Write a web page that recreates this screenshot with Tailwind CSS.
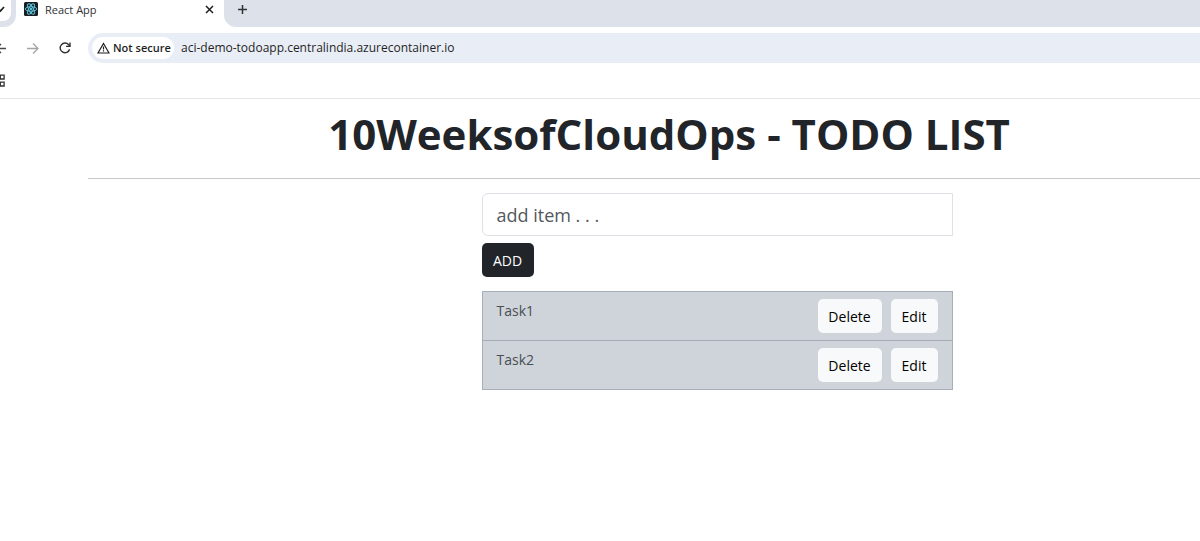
<!DOCTYPE html>
<html lang="en">
  <head>
    <meta charset="utf-8">
    <meta name="viewport" content="width=device-width, initial-scale=1">
    <script src="https://cdn.jsdelivr.net/npm/@tailwindcss/browser@4"></script>
    <title>React App</title>
  </head>
  <body class="min-h-screen overflow-x-hidden bg-white font-['Open_Sans','Noto_Sans',sans-serif] text-[#212529]">
    <!-- Browser window -->
    <header class="border-b border-[#e4e5e7]">
      <div class="flex h-[27px] bg-white">
        <div class="w-4 rounded-br-xl bg-[#dde2ea]">
          <button aria-label="Search tabs" class="flex h-[21px] w-[11px] items-start justify-end overflow-hidden rounded-br-lg bg-white">
            <svg class="mt-[6px] mr-[6px] h-2 w-[5px] shrink-0" viewBox="0 0 5 8" fill="none" stroke="#1f1f1f" stroke-width="1.7"><path d="M-3 1l3.500 4L4 1"/></svg>
          </button>
        </div>
        <div class="flex w-[208px] items-start pl-2">
          <svg class="mt-[2px] h-[14px] w-[14px] shrink-0" viewBox="0 0 28 28">
            <rect width="28" height="28" rx="3" fill="#1b1d21"/>
            <g fill="none" stroke="#58c4dc" stroke-width="2">
              <ellipse cx="14" cy="14" rx="11.500" ry="4.500"/>
              <ellipse cx="14" cy="14" rx="11.500" ry="4.500" transform="rotate(60 14 14)"/>
              <ellipse cx="14" cy="14" rx="11.500" ry="4.500" transform="rotate(120 14 14)"/>
            </g>
            <circle cx="14" cy="14" r="2.600" fill="#58c4dc"/>
          </svg>
          <span class="ml-[7px] flex-1 text-[11px] leading-[19px] text-[#303134]">React App</span>
          <button aria-label="Close tab" class="mt-[5px] mr-[10px]">
            <svg class="h-[9px] w-[9px]" viewBox="0 0 9 9" stroke="#1f1f1f" stroke-width="1.5"><path d="M1 1l7 7M8 1l-7 7"/></svg>
          </button>
        </div>
        <div class="flex-1 rounded-bl-xl bg-[#dde2ea]">
          <button aria-label="New tab" class="mt-1 ml-[13px] block">
            <svg class="h-[11px] w-[11px]" viewBox="0 0 11 11" stroke="#303134" stroke-width="1.5"><path d="M5.500 1v9M1 5.500h9"/></svg>
          </button>
        </div>
      </div>

      <nav class="flex items-center pt-[6px]">
        <button aria-label="Back" class="w-[27px]">
          <svg class="h-[11px] w-[6px]" viewBox="0 0 6 11" fill="none" stroke="#474747" stroke-width="1.4"><path d="M-5 5.500H6M5 .5M1 1L-3.500 5.500 1 10"/></svg>
        </button>
        <button aria-label="Forward" class="w-8">
          <svg class="h-[11px] w-[12px]" viewBox="0 0 12 11" fill="none" stroke="#a5a5a5" stroke-width="1.3"><path d="M0 5.500h11M6 .5l5 5-5 5"/></svg>
        </button>
        <button aria-label="Reload" class="w-[29px]">
          <svg class="h-3 w-3" viewBox="0 0 12 12" fill="none" stroke="#303134" stroke-width="1.4"><path d="M10.600 7.200A4.800 4.800 0 1 1 9.700 2.800L10.800 4"/><path d="M11 .5v3.900H7"/></svg>
        </button>
        <div class="flex h-[30px] flex-1 items-center rounded-l-full bg-[#e9eef6] pl-1">
          <button class="flex h-[22px] w-[82px] items-center rounded-full bg-white pl-[5px] text-[11px] font-semibold text-[#1f1f1f]">
            <svg class="mr-[3px] h-3 w-[13px] shrink-0" viewBox="0 0 13 12" fill="none" stroke="#1f1f1f" stroke-width="1.2"><path d="M6.500 1.500L12 11H1z"/><path d="M6.500 4.500v3M6.500 8.300v1.300"/></svg>
            <span class="whitespace-nowrap">Not secure</span>
          </button>
          <input aria-label="Address" class="ml-[7px] min-w-0 flex-1 bg-transparent text-[12px] text-[#1f1f1f] outline-none" value="aci-demo-todoapp.centralindia.azurecontainer.io">
        </div>
      </nav>

      <div class="flex h-[35px] items-center">
        <button aria-label="Apps">
          <svg class="h-[13px] w-[5px]" viewBox="0 0 5 13" fill="none" stroke="#303134" stroke-width="1.3"><path d="M.3 1.200h3.800v3.800H.3zM.3 8.200h3.800v3.800H.3z"/></svg>
        </button>
      </div>
    </header>

    <!-- Todo app -->
    <main>
      <h1 class="pt-2 pl-[138px] text-center text-[42px] leading-[54px] font-bold whitespace-nowrap">10WeeksofCloudOps - TODO LIST</h1>
      <hr class="mt-[17px] ml-[88px] border-[#c8c9ca]">
      <div class="pt-[14px] pl-[234px]">
        <div class="mx-auto max-w-[471px]">
          <form>
            <input type="text" aria-label="New item" placeholder="add item . . ." class="block h-[43px] w-full rounded-l-md border border-[#dee2e6] px-[14px] text-[18px] placeholder:text-[#54585c] outline-none">
            <button type="button" class="mt-[7px] block h-[34px] w-[52px] rounded-[5px] bg-[#212529] text-[14px] text-white">ADD</button>
          </form>
          <ul class="mt-[14px] divide-y divide-[#a3abb4] border border-[#a6afb9] bg-[#ced4da] text-[14px]">
            <li class="flex items-start justify-between px-[14px] py-[7px]">
              <span class="leading-6 text-[#494e53]">Task1</span>
              <div class="flex gap-[9px] text-black">
                <button class="h-[34px] w-16 rounded-[5px] bg-[#f8f9fa]">Delete</button>
                <button class="h-[34px] w-[47px] rounded-[5px] bg-[#f8f9fa]">Edit</button>
              </div>
            </li>
            <li class="flex items-start justify-between px-[14px] py-[7px]">
              <span class="leading-6 text-[#494e53]">Task2</span>
              <div class="flex gap-[9px] text-black">
                <button class="h-[34px] w-16 rounded-[5px] bg-[#f8f9fa]">Delete</button>
                <button class="h-[34px] w-[47px] rounded-[5px] bg-[#f8f9fa]">Edit</button>
              </div>
            </li>
          </ul>
        </div>
      </div>
    </main>
  </body>
</html>
